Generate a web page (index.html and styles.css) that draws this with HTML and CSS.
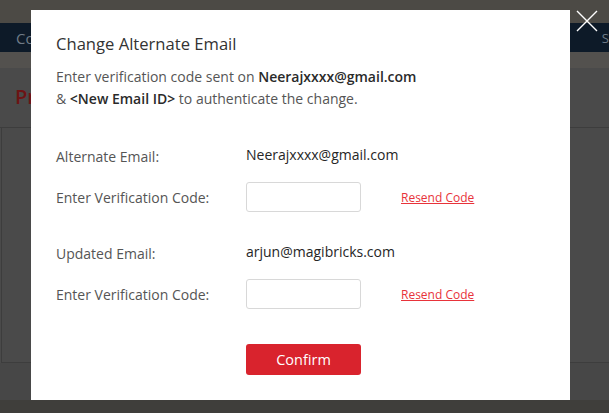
FILE: index.html
```html
<!DOCTYPE html>
<html lang="en">
<head>
<meta charset="utf-8">
<title>Change Alternate Email</title>
<link rel="stylesheet" href="styles.css">
</head>
<body>
<div class="page">
  <div class="topbar"></div>
  <nav class="nav">
    <span class="nav-item">Co</span>
    <span class="nav-item right">S</span>
  </nav>
  <div class="subbar"></div>
  <div class="content">
    <h1 class="page-title">Pr</h1>
    <div class="panel"></div>
    <div class="panel-foot"></div>
  </div>
  <div class="footer"></div>
</div>

<div class="modal">
  <h2 class="modal-title">Change Alternate Email</h2>
  <p class="intro">Enter verification code sent on <b>Neerajxxxx@gmail.com</b><br>&amp; <b>&lt;New Email ID&gt;</b> to authenticate the change.</p>

  <div class="row text-row">
    <span class="label">Alternate Email:</span>
    <span class="value">Neerajxxxx@gmail.com</span>
  </div>
  <div class="row input-row">
    <span class="label">Enter Verification Code:</span>
    <input class="code" type="text">
    <a class="resend" href="#">Resend Code</a>
  </div>

  <div class="row text-row second">
    <span class="label">Updated Email:</span>
    <span class="value">arjun@magibricks.com</span>
  </div>
  <div class="row input-row">
    <span class="label">Enter Verification Code:</span>
    <input class="code" type="text">
    <a class="resend" href="#">Resend Code</a>
  </div>

  <div class="actions">
    <button class="confirm" type="button">Confirm</button>
  </div>
</div>

<button class="close" type="button" aria-label="Close">
  <svg width="22" height="22" viewBox="0 0 22 22"><path d="M1 1 L21 21 M21 1 L1 21" stroke="#ffffff" stroke-width="1.4" fill="none"/></svg>
</button>
</body>
</html>
```

FILE: styles.css
```css
* { box-sizing: border-box; }
html, body { margin: 0; padding: 0; }
body {
  width: 609px;
  height: 413px;
  overflow: hidden;
  background: #3f3e3b;
  font-family: "Open Sans", "Liberation Sans", sans-serif;
  position: relative;
}
.page { display: flex; flex-direction: column; height: 413px; }
.topbar { height: 23px; background: #4c4a45; }
.nav {
  height: 29px;
  background: #0d1a28;
  display: flex;
  justify-content: space-between;
  align-items: center;
  padding: 0 0 0 16px;
}
.nav-item { color: #6f7a86; font-size: 15px; }
.nav-item.right { margin-right: 0; font-size: 13px; }
.subbar { height: 16px; background: #53514e; }
.content { background: #4a4a4a; display: flex; flex-direction: column; }
.page-title {
  margin: 0;
  height: 60px;
  padding: 16px 0 0 15px;
  font-size: 20px;
  font-weight: 600;
  line-height: 26px;
  color: #6e1414;
  border-bottom: 1px solid #3d3d3d;
}
.panel {
  height: 235px;
  margin-left: 1px;
  border-left: 1px solid #3d3d3d;
  border-bottom: 1px solid #3d3d3d;
  background: #4a4a4a;
}
.panel-foot { height: 37px; background: #474747; }
.footer { flex: 1; background: #3f3e3b; }

.modal {
  position: absolute;
  left: 31px;
  top: 10px;
  width: 539px;
  height: 390px;
  background: #ffffff;
  padding: 22px 25px 25px 25px;
  color: #555555;
}
.modal-title {
  margin: 0;
  font-size: 16.6px;
  line-height: 24px;
  font-weight: 400;
  color: #333333;
}
.intro {
  margin: 10px 0 0 0;
  font-size: 14px;
  line-height: 22px;
  color: #555555;
}
.intro b { font-weight: 600; color: #2a2a2a; }

.row {
  display: flex;
  align-items: center;
  height: 30px;
  font-size: 14px;
}
.text-row { margin-top: 31px; }
.text-row.second { margin-top: 26px; }
.input-row { margin-top: 11px; }
.label { width: 190px; flex: none; color: #555555; }
.value { color: #262626; font-weight: 500; padding-bottom: 4px; }
.code {
  width: 115px;
  height: 30px;
  border: 1px solid #d8d8d8;
  border-radius: 3px;
  background: #ffffff;
  margin: 0;
  padding: 0 6px;
  font: inherit;
}
.resend {
  margin-left: 40px;
  color: #e8333a;
  font-size: 12px;
  text-decoration: underline;
}
.actions { margin-top: 35px; padding-left: 190px; }
.confirm {
  width: 115px;
  height: 31px;
  border: none;
  border-radius: 3px;
  background: #d9232d;
  color: #ffffff;
  font-family: "Open Sans", "Liberation Sans", sans-serif;
  font-size: 14.5px;
  font-weight: 500;
  padding: 0;
}
.close {
  position: absolute;
  left: 576px;
  top: 10px;
  width: 22px;
  height: 22px;
  padding: 0;
  border: none;
  background: transparent;
  line-height: 0;
}
```
